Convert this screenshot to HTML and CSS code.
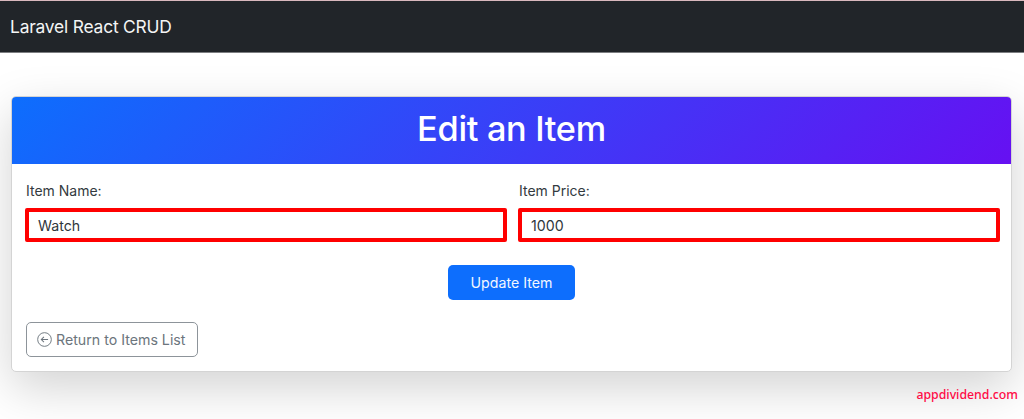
FILE: index.html
```html
<!DOCTYPE html>
<html lang="en">
<head>
<meta charset="utf-8">
<title>Laravel React CRUD</title>
<link rel="stylesheet" href="styles.css">
</head>
<body>
<nav class="navbar"><a class="brand">Laravel React CRUD</a></nav>
<main class="page">
  <section class="card">
    <header class="card-header"><h1>Edit an Item</h1></header>
    <form class="card-body">
      <div class="fields">
        <div class="field">
          <label>Item Name:</label>
          <div class="input">Watch</div>
        </div>
        <div class="field">
          <label>Item Price:</label>
          <div class="input">1000</div>
        </div>
      </div>
      <div class="actions"><button type="button" class="btn-primary">Update Item</button></div>
      <a class="btn-back">
        <svg class="back-icon" viewBox="0 0 16 16" width="15" height="15" fill="none" stroke="currentColor">
          <circle cx="8" cy="8" r="7.3" stroke-width="1"/>
          <path d="M11.8 8H4.6M7.4 5.2 4.6 8l2.8 2.8" stroke-width="1.1"/>
        </svg>Return to Items List</a>
    </form>
  </section>
</main>
<div class="watermark">appdividend.com</div>
</body>
</html>
```
FILE: styles.css
```css
* { box-sizing: border-box; }
html, body { margin: 0; height: 419px; overflow: hidden; background: #fff; }
body { font-family: Inter, "Liberation Sans", sans-serif; color: #333a40; position: relative; }
.navbar { height: 53px; background: #212529; border-top: 1px solid #d9b8bd; border-bottom: 1px solid #7d7f82; padding: 0 10px; display: flex; align-items: center; }
.brand { color: #f4f5f5; font-size: 17.4px; letter-spacing: -0.2px; }
.page { padding: 43px 12px 0 11px; }
.card { height: 276px; background: #fff; border: 1px solid #d4d4d4; border-radius: 5px; box-shadow: 0 16px 48px rgba(0,0,0,.175); overflow: hidden; }
.card-header { height: 67px; padding-bottom: 5px; background: linear-gradient(135deg, #0d6efd, #6610f2); display: flex; align-items: center; justify-content: center; }
.card-header h1 { margin: 0; color: #fff; font-size: 34.3px; font-weight: 500; letter-spacing: -0.3px; }
.card-body { padding: 17px 11px 0 13px; }
.fields { display: flex; gap: 11px; }
.field { flex: 1; }
.field label { display: block; font-size: 14px; line-height: 20px; height: 27px; padding-left: 1px; }
.input { height: 34px; border: 4px solid #ff0000; border-radius: 2px; padding-left: 9px; font-size: 14.2px; line-height: 27px; color: #30363b; }
.actions { display: flex; justify-content: center; margin-top: 23px; padding-right: 2px; }
.btn-primary { width: 127px; height: 35px; background: #0d6efd; color: #f2f7ff; border: 0; border-radius: 5px; font: 14.2px Inter, "Liberation Sans", sans-serif; }
.btn-back { display: inline-flex; align-items: center; gap: 4px; margin-top: 22px; margin-left: 1px; height: 35px; width: 172px; padding-left: 10px; border: 1px solid #8d949a; border-radius: 5px; color: #6c757d; font-size: 14.2px; }
.back-icon { flex: none; }
.watermark { position: absolute; right: 6px; top: 386px; color: #ff0a45; font-family: "Noto Sans", sans-serif; font-size: 12.3px; font-weight: 500; }
```
